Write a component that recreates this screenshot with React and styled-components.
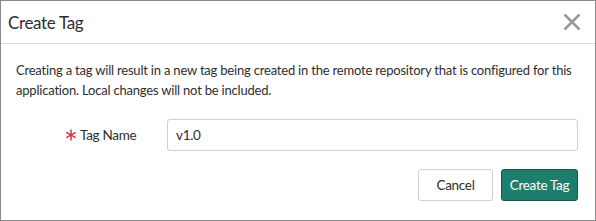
import React from "react";
import styled, { createGlobalStyle } from "styled-components";

const Global = createGlobalStyle`
  html, body {
    margin: 0;
    padding: 0;
    background: #fff;
  }
  * {
    box-sizing: border-box;
  }
`;

export default function App() {
  return (
    <>
      <Global />
      <Dialog>
        <Header>
          <Title>Create Tag</Title>
          <CloseButton aria-label="Close">
            <svg width="18" height="18" viewBox="0 0 18 18">
              <path
                d="M1.5 1.5 L16.5 16.5 M16.5 1.5 L1.5 16.5"
                stroke="#999"
                strokeWidth="2.6"
                fill="none"
              />
            </svg>
          </CloseButton>
        </Header>
        <Body>
          <Message>
            Creating a tag will result in a new tag being created in the remote
            repository that is configured for this application. Local changes
            will not be included.
          </Message>
          <FieldRow>
            <Label>
              <Required viewBox="0 0 12 12" width="12" height="12">
                <path
                  d="M6 0.6 V11.4 M1.3 3.3 L10.7 8.7 M10.7 3.3 L1.3 8.7"
                  stroke="#d9363e"
                  strokeWidth="1.5"
                  fill="none"
                />
              </Required>
              Tag Name
            </Label>
            <Input defaultValue="v1.0" />
          </FieldRow>
          <Footer>
            <Button>Cancel</Button>
            <Button primary>Create Tag</Button>
          </Footer>
        </Body>
      </Dialog>
    </>
  );
}

// -----------Style--------------

const Dialog = styled.div`
  width: 596px;
  height: 221px;
  border: 1px solid #8a8a8a;
  background: #fff;
  font-family: "Lato", "Open Sans", sans-serif;
  color: #2e2e2e;
  display: flex;
  flex-direction: column;
`;

const Header = styled.div`
  height: 43px;
  border-bottom: 1px solid #dcdcdc;
  display: flex;
  align-items: center;
  justify-content: space-between;
  padding: 0 14px 0 7px;
`;

const Title = styled.h1`
  margin: 0;
  font-size: 17px;
  font-weight: 400;
  color: #2e2e2e;
  letter-spacing: -0.35px;
`;

const CloseButton = styled.button`
  border: none;
  background: none;
  padding: 0;
  width: 18px;
  height: 18px;
  display: flex;
  cursor: pointer;
`;

const Body = styled.div`
  flex: 1;
  padding: 16px 17px 17px 15px;
  display: flex;
  flex-direction: column;
`;

const Message = styled.p`
  margin: 0;
  font-size: 13px;
  line-height: 20px;
  letter-spacing: -0.2px;
  color: #2e2e2e;
`;

const FieldRow = styled.div`
  display: flex;
  align-items: center;
  margin-top: 19px;
`;

const Label = styled.label`
  width: 151px;
  padding-left: 49px;
  display: flex;
  align-items: center;
  gap: 3px;
  font-size: 13.5px;
  letter-spacing: -0.3px;
  color: #2e2e2e;
`;

const Required = styled.svg`
  flex-shrink: 0;
`;

const Input = styled.input`
  flex: 1;
  height: 32px;
  border: 1px solid #cfcfcf;
  border-radius: 3px;
  padding: 0 8px;
  font-family: inherit;
  font-size: 13.5px;
  letter-spacing: -0.3px;
  color: #2e2e2e;
  outline: none;
`;

const Footer = styled.div`
  display: flex;
  justify-content: flex-end;
  gap: 8px;
  margin-top: 18px;
`;

const Button = styled.button`
  height: 32px;
  width: ${(p) => (p.primary ? "77px" : "75px")};
  padding: 0;
  border-radius: 3px;
  font-family: inherit;
  font-size: 13.5px;
  letter-spacing: -0.3px;
  cursor: pointer;
  border: 1px solid ${(p) => (p.primary ? "#15574c" : "#cfcfcf")};
  background: ${(p) => (p.primary ? "#1e7e6d" : "#fff")};
  color: ${(p) => (p.primary ? "#fff" : "#2e2e2e")};
`;
